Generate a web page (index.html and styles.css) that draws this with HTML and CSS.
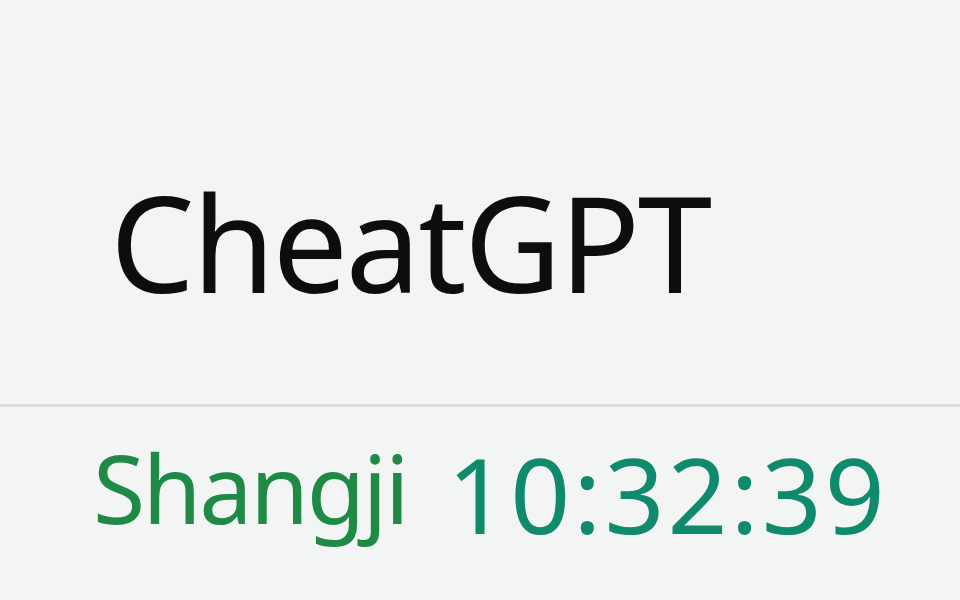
FILE: index.html
```html
<!DOCTYPE html>
<html>
<head>
<meta charset="utf-8">
<link rel="stylesheet" href="styles.css">
</head>
<body>
<div class="screen">
  <header class="title-bar">
    <h1 class="title">CheatGPT</h1>
  </header>
  <div class="divider"></div>
  <div class="meta">
    <span class="author">Shangji</span>
    <span class="time">10:32:39</span>
  </div>
</div>
</body>
</html>
```
FILE: styles.css
```css
html, body {
  margin: 0;
  padding: 0;
  background: #f3f5f4;
}
.screen {
  width: 960px;
  height: 600px;
  display: flex;
  flex-direction: column;
  overflow: hidden;
  font-family: "Noto Sans", "Open Sans", sans-serif;
}
.title-bar {
  height: 404px;
  padding-top: 174px;
  padding-left: 110px;
  box-sizing: border-box;
}
.title {
  margin: 0;
  font-size: 134px;
  line-height: 134px;
  font-weight: 400;
  color: #0d0d0d;
  letter-spacing: -2.5px;
}
.divider {
  height: 3px;
  background: #dcdfdd;
}
.meta {
  display: flex;
  align-items: flex-start;
  padding-left: 93px;
  padding-top: 30px;
  gap: 40px;
}
.author {
  font-size: 95px;
  line-height: 100px;
  color: #1f8a46;
  letter-spacing: -2.3px;
}
.time {
  margin-top: 7px;
  font-size: 105px;
  line-height: 100px;
  color: #108a6c;
  letter-spacing: 3px;
}
```
